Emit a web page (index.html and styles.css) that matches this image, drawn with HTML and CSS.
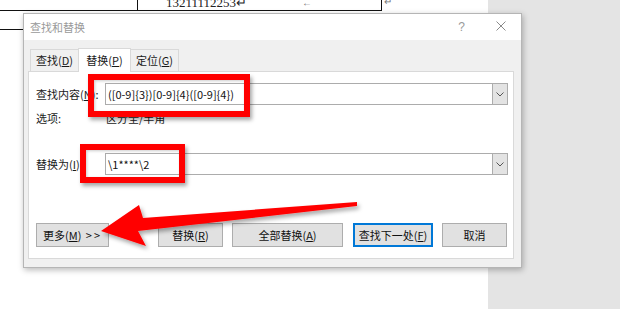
FILE: index.html
```html
<!DOCTYPE html>
<html>
<head>
    <title>查找和替换</title>
    <link rel="stylesheet" href="styles.css">
</head>
<body>
<div class="screen">

    <!-- document behind the dialog -->
    <div class="doc">
        <div class="tbl-row">
            <div class="tbl">
                <div class="cell c1"></div>
                <div class="cell c2">
                    <span class="num">13211112253&#8629;</span>
                    <span class="tab-arrow">&#8592;</span>
                </div>
            </div>
            <span class="mark">&#8629;</span>
        </div>
        <div class="rule"></div>
    </div>
    <div class="side"></div>

    <!-- find and replace dialog -->
    <div class="dialog">
        <div class="titlebar">
            <span class="title">查找和替换</span>
            <span class="help">?</span>
            <svg class="close" width="10" height="10" viewBox="0 0 10 10">
                <path d="M0.5 0.5 L9.5 9.5 M9.5 0.5 L0.5 9.5" stroke="#8a8a8a" stroke-width="1" fill="none"/>
            </svg>
        </div>

        <div class="dlg-body">
            <div class="tabs">
                <div class="tab">查找(<u>D</u>)</div>
                <div class="tab active">替换(<u>P</u>)</div>
                <div class="tab">定位(<u>G</u>)</div>
            </div>

            <div class="panel">
                <div class="row row-find">
                    <span class="lbl">查找内容(<u>N</u>):</span>
                    <div class="combo">
                        <span class="val">([0-9]{3})[0-9]{4}([0-9]{4})</span>
                        <span class="drop">
                            <svg width="8" height="5" viewBox="0 0 8 5"><path d="M0.5 0.5 L4 4 L7.5 0.5" stroke="#555" fill="none"/></svg>
                        </span>
                    </div>
                </div>

                <div class="row row-opts">
                    <span class="lbl">选项:</span>
                    <span class="opt">区分全/半角</span>
                </div>

                <div class="row row-repl">
                    <span class="lbl">替换为(<u>I</u>):</span>
                    <div class="combo">
                        <span class="val">\1****\2</span>
                        <span class="drop">
                            <svg width="8" height="5" viewBox="0 0 8 5"><path d="M0.5 0.5 L4 4 L7.5 0.5" stroke="#555" fill="none"/></svg>
                        </span>
                    </div>
                </div>

                <div class="buttons">
                    <button class="btn btn-more">更多(<u>M</u>) <span class="gt">&gt;&gt;</span></button>
                    <button class="btn btn-repl">替换(<u>R</u>)</button>
                    <button class="btn btn-all">全部替换(<u>A</u>)</button>
                    <button class="btn btn-next">查找下一处(<u>F</u>)</button>
                    <button class="btn btn-cancel">取消</button>
                </div>
            </div>
        </div>
    </div>

    <!-- red annotations -->
    <div class="redbox box-find"></div>
    <div class="redbox box-repl"></div>
    <svg class="arrow" width="620" height="309" viewBox="0 0 620 309">
        <defs>
            <filter id="shade" x="-10%" y="-30%" width="130%" height="180%">
                <feDropShadow dx="2" dy="3" stdDeviation="2" flood-color="#000" flood-opacity="0.35"/>
            </filter>
        </defs>
        <polygon points="101,231 139,205 143,218 357,202 357,206 138,231 146,246" fill="#ff0000" filter="url(#shade)"/>
    </svg>
</div>
</body>
</html>
```

FILE: styles.css
```css
/* page frame */
body {
    margin: 0;
    font-family: "Noto Sans CJK SC", "Noto Sans", sans-serif;
    font-size: 11px;
    color: #1a1a1a;
}

.screen {
    position: relative;
    display: flex;
    width: 620px;
    height: 309px;
    overflow: hidden;
}

.doc {
    width: 488px;
    background: #fff;
}

.side {
    flex: 1;
    background: #e4e4e4;
}

/* table corner of the document */
.tbl-row {
    display: flex;
}

.tbl {
    display: flex;
    flex-shrink: 0;
    height: 10px;
    width: 382px;
    border-bottom: 1px solid #111;
}

.cell {
    flex-shrink: 0;
    height: 10px;
    border-right: 1px solid #111;
}

.c1 {
    width: 137px;
}

.c2 {
    width: 243px;
    display: flex;
    font-family: "Liberation Serif", serif;
    font-size: 13px;
    line-height: 6px;
    color: #222;
}

.num {
    padding-left: 28px;
}

.tab-arrow {
    margin-left: 55px;
    color: #777;
    font-size: 10px;
}

.mark {
    font-family: "Liberation Serif", serif;
    font-size: 10px;
    line-height: 4px;
    color: #777;
    margin-left: 2px;
}

.rule {
    margin-top: 18px;
    width: 381px;
    height: 1px;
    background: #111;
}

/* dialog */
.dialog {
    position: absolute;
    left: 23px;
    top: 13px;
    width: 499px;
    height: 255px;
    box-sizing: border-box;
    border: 1px solid #b5b5b5;
    background: #f0f0f0;
    box-shadow: 1px 2px 6px rgba(0, 0, 0, 0.28);
}

.titlebar {
    display: flex;
    align-items: center;
    height: 26px;
    background: #fff;
    padding: 0 15px 0 6px;
}

.title {
    flex: 1;
    color: #9a9a9a;
    font-size: 11px;
}

.help {
    color: #9a9a9a;
    font-family: "Liberation Sans", sans-serif;
    font-size: 12px;
    margin-right: 31px;
}

.close {
    margin-top: -2px;
}

.dlg-body {
    padding: 8px 7px 8px 4px;
}

.tabs {
    display: flex;
    align-items: flex-end;
    margin-left: 2px;
    height: 23px;
}

.tab {
    height: 22px;
    box-sizing: border-box;
    border: 1px solid #d9d9d9;
    border-bottom: none;
    background: #f0f0f0;
    line-height: 21px;
    text-align: center;
    width: 49px;
    position: relative;
}

.tab.active {
    width: 53px;
    height: 24px;
    background: #fff;
    margin-bottom: -1px;
    z-index: 1;
    line-height: 23px;
    margin-left: -1px;
    margin-right: -1px;
}

.panel {
    height: 188px;
    box-sizing: border-box;
    border: 1px solid #d9d9d9;
    background: #fff;
    padding: 0 5px 0 7px;
}

.row {
    display: flex;
    align-items: center;
}

.lbl {
    width: 69px;
    flex-shrink: 0;
}

.row-find {
    margin-top: 11px;
    height: 22px;
}

.row-opts {
    margin-top: 5px;
    height: 16px;
}

.opt {
    padding-left: 1px;
}

.row-repl {
    margin-top: 27px;
    height: 22px;
}

.combo {
    flex: 1;
    height: 22px;
    box-sizing: border-box;
    border: 1px solid #acacac;
    display: flex;
    align-items: center;
}

.val {
    flex: 1;
    padding-left: 2px;
    color: #111;
}

.drop {
    width: 15px;
    height: 20px;
    box-sizing: border-box;
    border-left: 1px solid #acacac;
    background: #e3e3e3;
    display: flex;
    align-items: center;
    justify-content: center;
}

u {
    text-underline-offset: 1px;
}

/* button row */
.buttons {
    display: flex;
    margin-top: 48px;
}

.btn {
    height: 24px;
    box-sizing: border-box;
    border: 1px solid #adadad;
    background: #e1e1e1;
    font-family: "Noto Sans CJK SC", "Noto Sans", sans-serif;
    font-size: 11px;
    color: #111;
    padding: 0;
}

.btn-more {
    width: 73px;
}

.gt {
    letter-spacing: 2px;
    margin-left: 2px;
}

.btn-repl {
    width: 65px;
    margin-left: 49px;
}

.btn-all {
    width: 111px;
    margin-left: 9px;
}

.btn-next {
    width: 80px;
    margin-left: 10px;
    border: 2px solid #0078d7;
}

.btn-cancel {
    width: 65px;
    margin-left: 9px;
}

/* annotations */
.redbox {
    position: absolute;
    box-sizing: border-box;
    border: 6px solid #ff0000;
    box-shadow: 2px 3px 4px rgba(0, 0, 0, 0.35), inset 1px 1px 3px rgba(0, 0, 0, 0.2);
}

.box-find {
    left: 88px;
    top: 74px;
    width: 162px;
    height: 43px;
}

.box-repl {
    left: 80px;
    top: 144px;
    width: 105px;
    height: 39px;
}

.arrow {
    position: absolute;
    left: 0;
    top: 0;
    pointer-events: none;
}
```
